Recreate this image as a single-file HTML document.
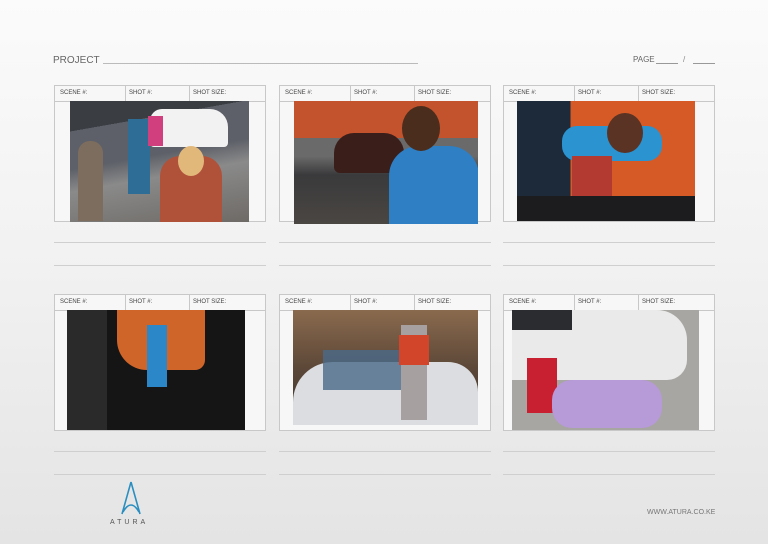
<!DOCTYPE html>
<html><head><style>
*{margin:0;padding:0;box-sizing:border-box}
body{width:768px;height:544px;overflow:hidden;font-family:"Liberation Sans",sans-serif;background:linear-gradient(#fbfbfb,#f1f1f1 50%,#e4e4e4);position:relative;color:#555}
.a{position:absolute}
.card{position:absolute;width:212px;height:137px;border:1px solid #c8c8c8;background:#f7f7f7}
.hd{position:absolute;left:0;top:0;right:0;height:16px;border-bottom:1px solid #c8c8c8;font-size:6px;color:#444}
.hd span{position:absolute;top:4px}
.hd i{position:absolute;top:0;height:16px;border-left:1px solid #c8c8c8}
.img{position:absolute;overflow:hidden}
.ln{position:absolute;height:1px;background:#cfcfcf;width:212px}
</style></head><body>
<div class="a" style="left:53px;top:55px;font-size:10px;color:#666">PROJECT</div>
<div class="a" style="left:103px;top:63px;width:315px;height:1px;background:#bbb"></div>
<div class="a" style="left:633px;top:55px;font-size:8px;color:#666">PAGE</div>
<div class="a" style="left:656px;top:63px;width:22px;height:1px;background:#999"></div>
<div class="a" style="left:683px;top:55px;font-size:8px;color:#888">/</div>
<div class="a" style="left:693px;top:63px;width:22px;height:1px;background:#999"></div>

<!-- row 1 -->
<div class="card" style="left:54px;top:85px"><div class="hd"><span style="left:5px">SCENE #:</span><i style="left:70px"></i><span style="left:74px">SHOT #:</span><i style="left:134px"></i><span style="left:138px">SHOT SIZE:</span></div></div>
<div class="img" style="left:70px;top:101px;width:179px;height:121px;background:linear-gradient(170deg,#3a3d42 0 20%,#5d6068 20% 45%,#8a8a8a 60%,#6e6a66)">
<div class="a" style="left:80px;top:8px;width:78px;height:38px;background:#f2f2f2;border-radius:12px 18px 4px 4px"></div>
<div class="a" style="left:8px;top:40px;width:25px;height:80px;background:#7d6d5e;border-radius:12px 12px 0 0"></div>
<div class="a" style="left:58px;top:18px;width:22px;height:75px;background:#2d6d96"></div>
<div class="a" style="left:78px;top:15px;width:15px;height:30px;background:#d23f7f"></div>
<div class="a" style="left:90px;top:55px;width:62px;height:66px;background:#b0513a;border-radius:20px 20px 0 0"></div>
<div class="a" style="left:108px;top:45px;width:26px;height:30px;background:#e2b77a;border-radius:50%"></div>
</div>
<div class="card" style="left:279px;top:85px"><div class="hd"><span style="left:5px">SCENE #:</span><i style="left:70px"></i><span style="left:74px">SHOT #:</span><i style="left:134px"></i><span style="left:138px">SHOT SIZE:</span></div></div>
<div class="img" style="left:294px;top:101px;width:184px;height:123px;background:linear-gradient(#c3532c 0 30%,#6b6a6a 30% 45%,#3a3a3c 60%,#4a4642)">
<div class="a" style="left:40px;top:32px;width:70px;height:40px;background:#3a1e1a;border-radius:20px 20px 6px 6px"></div>
<div class="a" style="left:95px;top:45px;width:90px;height:78px;background:#2e7fc4;border-radius:30px 30px 0 0"></div>
<div class="a" style="left:108px;top:5px;width:38px;height:45px;background:#4a2d1d;border-radius:50%"></div>
</div>
<div class="card" style="left:503px;top:85px"><div class="hd"><span style="left:5px">SCENE #:</span><i style="left:70px"></i><span style="left:74px">SHOT #:</span><i style="left:134px"></i><span style="left:138px">SHOT SIZE:</span></div></div>
<div class="img" style="left:517px;top:101px;width:178px;height:120px;background:linear-gradient(90deg,#1c2a3a 0 30%,#d55a26 30%)">
<div class="a" style="left:0;top:95px;width:178px;height:25px;background:#1c1c1e"></div>
<div class="a" style="left:45px;top:25px;width:100px;height:35px;background:#2b93cf;border-radius:15px"></div>
<div class="a" style="left:90px;top:12px;width:36px;height:40px;background:#5a3324;border-radius:50%"></div>
<div class="a" style="left:55px;top:55px;width:40px;height:40px;background:#b23a30"></div>
</div>
<div class="ln" style="left:54px;top:242px"></div><div class="ln" style="left:279px;top:242px"></div><div class="ln" style="left:503px;top:242px"></div>
<div class="ln" style="left:54px;top:265px"></div><div class="ln" style="left:279px;top:265px"></div><div class="ln" style="left:503px;top:265px"></div>

<!-- row 2 -->
<div class="card" style="left:54px;top:294px"><div class="hd"><span style="left:5px">SCENE #:</span><i style="left:70px"></i><span style="left:74px">SHOT #:</span><i style="left:134px"></i><span style="left:138px">SHOT SIZE:</span></div></div>
<div class="img" style="left:67px;top:310px;width:178px;height:120px;background:#151515">
<div class="a" style="left:50px;top:0;width:88px;height:60px;background:#d0652a;border-radius:0 0 10px 30px"></div>
<div class="a" style="left:80px;top:15px;width:20px;height:62px;background:#2c87c8"></div>
<div class="a" style="left:0;top:0;width:40px;height:120px;background:#2a2a2a"></div>
</div>
<div class="card" style="left:279px;top:294px"><div class="hd"><span style="left:5px">SCENE #:</span><i style="left:70px"></i><span style="left:74px">SHOT #:</span><i style="left:134px"></i><span style="left:138px">SHOT SIZE:</span></div></div>
<div class="img" style="left:293px;top:310px;width:185px;height:115px;background:linear-gradient(#8a6a4e,#5d4838 50%,#3a3330)">
<div class="a" style="left:0;top:52px;width:185px;height:63px;background:#dcdde0;border-radius:40px 30px 0 0"></div>
<div class="a" style="left:30px;top:40px;width:80px;height:40px;background:#4a6a8a;opacity:.8"></div>
<div class="a" style="left:108px;top:15px;width:26px;height:95px;background:#a6a1a0"></div>
<div class="a" style="left:106px;top:25px;width:30px;height:30px;background:#d2452b"></div>
</div>
<div class="card" style="left:503px;top:294px"><div class="hd"><span style="left:5px">SCENE #:</span><i style="left:70px"></i><span style="left:74px">SHOT #:</span><i style="left:134px"></i><span style="left:138px">SHOT SIZE:</span></div></div>
<div class="img" style="left:512px;top:310px;width:187px;height:120px;background:#a8a6a2">
<div class="a" style="left:0;top:0;width:175px;height:70px;background:#eaeaea;border-radius:0 30px 20px 0"></div>
<div class="a" style="left:0;top:0;width:60px;height:20px;background:#2a2c30"></div>
<div class="a" style="left:15px;top:48px;width:30px;height:55px;background:#c82030"></div>
<div class="a" style="left:40px;top:70px;width:110px;height:48px;background:#b79ad8;border-radius:20px"></div>
</div>
<div class="ln" style="left:54px;top:451px"></div><div class="ln" style="left:279px;top:451px"></div><div class="ln" style="left:503px;top:451px"></div>
<div class="ln" style="left:54px;top:474px"></div><div class="ln" style="left:279px;top:474px"></div><div class="ln" style="left:503px;top:474px"></div>

<svg class="a" style="left:118px;top:480px" width="26" height="37" viewBox="0 0 26 37"><path d="M13 2 L4 34 M13 2 L22 34 M5 32 Q13 18 21 32" fill="none" stroke="#2a8fc0" stroke-width="1.6"/></svg>
<div class="a" style="left:110px;top:519px;font-size:7px;letter-spacing:3px;color:#555">ATURA</div>
<div class="a" style="left:647px;top:509px;font-size:7px;color:#777">WWW.ATURA.CO.KE</div>
</body></html>
